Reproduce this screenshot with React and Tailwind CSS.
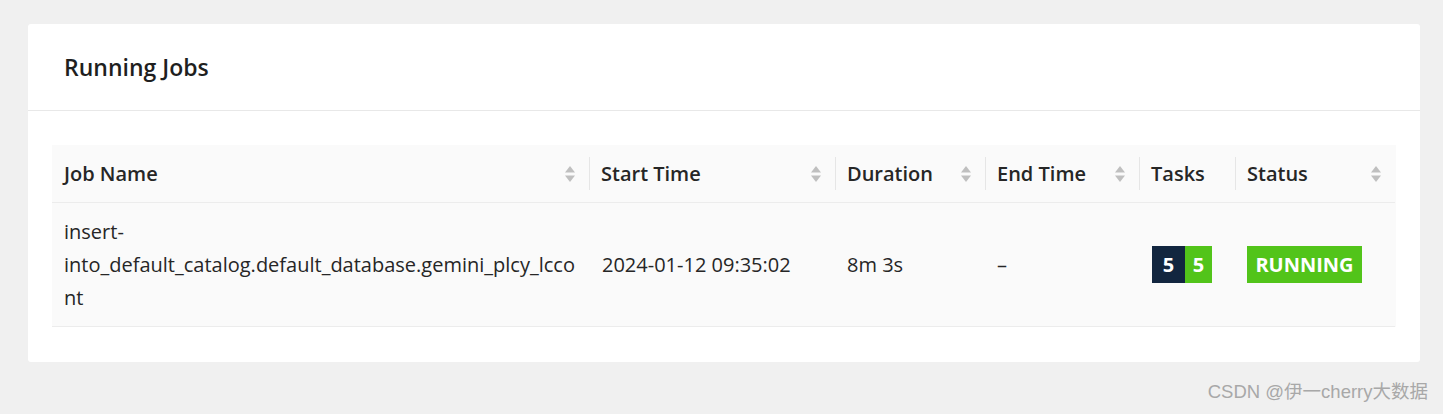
function SortIcon() {
  return (
    <svg width="12" height="18" viewBox="0 0 12 18" className="shrink-0">
      <path d="M6 1 L11 7.5 H1 Z" fill="#bfbfbf" />
      <path d="M6 17 L11 10.5 H1 Z" fill="#bfbfbf" />
    </svg>
  )
}

const cols = [
  { name: 'Job Name', sort: true },
  { name: 'Start Time', sort: true },
  { name: 'Duration', sort: true },
  { name: 'End Time', sort: true },
  { name: 'Tasks', sort: false },
  { name: 'Status', sort: true },
]

export default function App() {
  return (
    <div
      className="relative min-h-[414px] bg-[#f0f0f0] pl-[28px] pr-[23px] pt-[24px] text-[#262626]"
      style={{ fontFamily: '"Open Sans", "Noto Sans", sans-serif' }}
    >
      <div className="rounded-[3px] bg-white">
        <div className="flex h-[87px] items-center border-b border-[#e8e8e8] pl-[36px]">
          <h2 className="text-[23px] font-semibold leading-none text-[#1f1f1f]">Running Jobs</h2>
        </div>
        <div className="px-[24px] pb-[35px] pt-[34px]">
          <div className="grid grid-cols-[537px_246px_150px_154px_96px_160px] bg-[#fafafa] text-[20px]">
            {cols.map((c, i) => (
              <div
                key={c.name}
                className="relative flex h-[58px] items-center justify-between border-b border-[#ececec] pl-[12px] pr-[13px] font-semibold text-[#262626]"
              >
                {i > 0 && <span className="absolute left-0 top-[12px] h-[33px] w-px bg-[#e6e6e6]" />}
                <span>{c.name}</span>
                {c.sort && <SortIcon />}
              </div>
            ))}

            <div className="flex h-[124px] flex-col justify-center border-b border-[#ececec] pl-[12px] leading-[33px]">
              <span className="whitespace-nowrap">insert-</span>
              <span className="whitespace-nowrap">into_default_catalog.default_database.gemini_plcy_lcco</span>
              <span className="whitespace-nowrap">nt</span>
            </div>
            <div className="flex items-center border-b border-[#ececec] pl-[13px] whitespace-nowrap">
              2024-01-12 09:35:02
            </div>
            <div className="flex items-center border-b border-[#ececec] pl-[12px]">8m 3s</div>
            <div className="flex items-center border-b border-[#ececec] pl-[12px]">–</div>
            <div className="flex items-center border-b border-[#ececec] pl-[13px]">
              <span className="flex h-[37px] w-[33px] items-center justify-center bg-[#12263f] font-bold text-white">5</span>
              <span className="flex h-[37px] w-[27px] items-center justify-center bg-[#52c41a] font-bold text-white">5</span>
            </div>
            <div className="flex items-center border-b border-[#ececec] pl-[12px]">
              <span className="flex h-[37px] w-[115px] items-center justify-center bg-[#52c41a] font-bold text-white">
                RUNNING
              </span>
            </div>
          </div>
        </div>
      </div>
      <div
        className="absolute bottom-[8px] right-[15px] text-[18.5px] text-[#a8a8a8]"
        style={{ fontFamily: '"Liberation Sans", "Noto Sans CJK SC", sans-serif' }}
      >
        CSDN @伊一cherry大数据
      </div>
    </div>
  )
}
